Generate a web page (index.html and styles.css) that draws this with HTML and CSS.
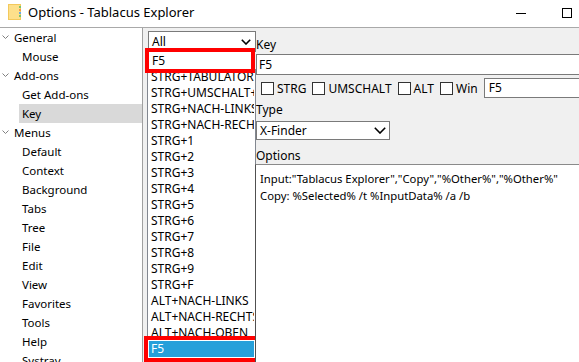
FILE: index.html
```html
<!DOCTYPE html>
<html lang="en">
<head>
    <meta charset="UTF-8">
    <meta name="viewport" content="width=device-width, initial-scale=1.0">
    <title>Options - Tablacus Explorer</title>
    <link rel="stylesheet" href="styles.css">
</head>
<body>
    <div class="window">
        <div class="titlebar">
            <svg class="app-icon" width="14" height="16" viewBox="0 0 14 16">
                <rect x="0.5" y="0.5" width="12" height="15" fill="#fde08b" stroke="#f3c95c"/>
                <rect x="11" y="2" width="2" height="2" fill="#7cc46a"/>
                <rect x="11" y="5" width="2" height="2" fill="#f29a4a"/>
                <rect x="11" y="8" width="2" height="2" fill="#6aa9e0"/>
                <rect x="11" y="11" width="2" height="2" fill="#7cc46a"/>
            </svg>
            <span class="title">Options - Tablacus Explorer</span>
            <span class="caption-btn">
                <svg width="10" height="10" viewBox="0 0 10 10"><path d="M0 5.5h10" stroke="#000" stroke-width="1"/></svg>
            </span>
            <span class="caption-btn">
                <svg width="10" height="10" viewBox="0 0 10 10"><rect x="0.5" y="0.5" width="9" height="9" fill="none" stroke="#000"/></svg>
            </span>
            <span class="caption-btn">
                <svg width="10" height="10" viewBox="0 0 10 10"><path d="M0 0L10 10M10 0L0 10" stroke="#000"/></svg>
            </span>
        </div>

        <div class="main">
            <ul class="tree">
                <li class="node"><svg class="twisty" width="7" height="5" viewBox="0 0 7 5"><path d="M0.5 0.5L3.5 3.5L6.5 0.5" fill="none" stroke="#808080"/></svg>General</li>
                <li class="leaf">Mouse</li>
                <li class="node"><svg class="twisty" width="7" height="5" viewBox="0 0 7 5"><path d="M0.5 0.5L3.5 3.5L6.5 0.5" fill="none" stroke="#808080"/></svg>Add-ons</li>
                <li class="leaf">Get Add-ons</li>
                <li class="leaf selected">Key</li>
                <li class="node"><svg class="twisty" width="7" height="5" viewBox="0 0 7 5"><path d="M0.5 0.5L3.5 3.5L6.5 0.5" fill="none" stroke="#808080"/></svg>Menus</li>
                <li class="leaf">Default</li>
                <li class="leaf">Context</li>
                <li class="leaf">Background</li>
                <li class="leaf">Tabs</li>
                <li class="leaf">Tree</li>
                <li class="leaf">File</li>
                <li class="leaf">Edit</li>
                <li class="leaf">View</li>
                <li class="leaf">Favorites</li>
                <li class="leaf">Tools</li>
                <li class="leaf">Help</li>
                <li class="leaf">Systray</li>
            </ul>

            <div class="content">
                <div class="keys">
                    <div class="combo all-combo">
                        <span>All</span>
                        <svg width="10" height="6" viewBox="0 0 10 6"><path d="M0.8 0.8L5 5L9.2 0.8" fill="none" stroke="#000" stroke-width="1.6"/></svg>
                    </div>
                    <div class="filter">F5</div>
                    <ul class="keylist">
                        <li>STRG+TABULATOR</li>
                        <li>STRG+UMSCHALT+TABULATOR</li>
                        <li>STRG+NACH-LINKS</li>
                        <li>STRG+NACH-RECHTS</li>
                        <li>STRG+1</li>
                        <li>STRG+2</li>
                        <li>STRG+3</li>
                        <li>STRG+4</li>
                        <li>STRG+5</li>
                        <li>STRG+6</li>
                        <li>STRG+7</li>
                        <li>STRG+8</li>
                        <li>STRG+9</li>
                        <li>STRG+F</li>
                        <li>ALT+NACH-LINKS</li>
                        <li>ALT+NACH-RECHTS</li>
                        <li>ALT+NACH-OBEN</li>
                        <li class="selected">F5</li>
                        <li>F6</li>
                    </ul>
                </div>

                <div class="detail">
                    <div class="field-label">Key</div>
                    <div class="textbox key-box">F5</div>
                    <div class="mods">
                        <span class="mod"><span class="check"></span>STRG</span>
                        <span class="mod"><span class="check"></span>UMSCHALT</span>
                        <span class="mod"><span class="check"></span>ALT</span>
                        <span class="mod"><span class="check"></span>Win</span>
                        <div class="textbox win-box">F5</div>
                    </div>
                    <div class="field-label type-label">Type</div>
                    <div class="combo type-combo">
                        <span>X-Finder</span>
                        <svg width="12" height="7" viewBox="0 0 12 7"><path d="M0.8 0.8L6 6L11.2 0.8" fill="none" stroke="#000" stroke-width="1.6"/></svg>
                    </div>
                    <div class="field-label options-label">Options</div>
                    <div class="options-text">Input:"Tablacus Explorer","Copy","%Other%","%Other%"<br>Copy: %Selected% /t %InputData% /a /b</div>
                </div>
            </div>
        </div>
    </div>
</body>
</html>
```

FILE: styles.css
```css
html, body {
    margin: 0;
    overflow: hidden;
}

body {
    font-family: "Noto Sans", "Open Sans", sans-serif;
    font-size: 12px;
    color: #000;
    background-color: #fff;
}

.window {
    width: 636px;
    height: 362px;
    display: flex;
    flex-direction: column;
}

/* Title bar */
.titlebar {
    height: 27px;
    flex-shrink: 0;
    display: flex;
    align-items: flex-start;
    background-color: #fff;
    border-bottom: 1px solid #a9a9a9;
}

.app-icon {
    margin: 4px 0 0 8px;
}

.title {
    margin-left: 6px;
    font-size: 13px;
    line-height: 24px;
    flex: 1;
}

.caption-btn {
    width: 46px;
    height: 23px;
    display: flex;
    align-items: center;
    justify-content: center;
    padding-top: 1px;
}

/* Main area */
.main {
    flex: 1;
    display: flex;
    overflow: hidden;
}

.tree {
    width: 142px;
    flex-shrink: 0;
    margin: 0;
    padding: 0;
    list-style: none;
    font-size: 11.5px;
    background-color: #fff;
    border-right: 1px solid #a0a0a0;
}

.tree li {
    height: 19px;
    line-height: 20px;
    white-space: nowrap;
}

.tree .node {
    padding-left: 2px;
}

.twisty {
    margin-right: 5px;
    vertical-align: 2px;
}

.tree .leaf {
    margin-left: 19px;
    padding-left: 3px;
}

.tree .leaf.selected {
    background-color: #d9d9d9;
}

.content {
    flex: 1;
    display: flex;
    background-color: #f0f0f0;
    padding: 3px 0 0 4px;
}

/* Key list column */
.keys {
    width: 109px;
    flex-shrink: 0;
    display: flex;
    flex-direction: column;
}

.combo {
    flex-shrink: 0;
    display: flex;
    align-items: center;
    justify-content: space-between;
    background-color: #fff;
    border: 1px solid #7a7a7a;
    box-sizing: border-box;
}

.all-combo {
    height: 21px;
    margin-left: 1px;
    padding: 0 4px 0 3px;
}

.filter {
    position: relative;
    z-index: 1;
    flex-shrink: 0;
    height: 25px;
    box-sizing: border-box;
    margin: -4px 1px 0 -2px;
    padding-left: 3px;
    line-height: 17px;
    border: 4px solid #f00;
    background-color: #fff;
}

.keylist {
    flex-shrink: 0;
    margin: -4px 0 0 0;
    padding: 0;
    list-style: none;
    background-color: #fff;
    border-left: 1px solid #828790;
    border-right: 1px solid #828790;
}

.keylist li {
    height: 16px;
    line-height: 16px;
    margin: 0 1px;
    padding-left: 2px;
    white-space: nowrap;
    overflow: hidden;
}

.keylist li.selected {
    background-color: #26a0da;
    color: #fff;
    outline: 4px solid #f00;
    outline-offset: 1px;
}

/* Detail column */
.detail {
    flex: 1;
    display: flex;
    flex-direction: column;
    padding-top: 6px;
}

.field-label {
    flex-shrink: 0;
    line-height: 16px;
    height: 16px;
}

.textbox {
    flex-shrink: 0;
    background-color: #fff;
    border: 1px solid #7a7a7a;
    box-sizing: border-box;
}

.key-box {
    height: 21px;
    margin-top: 1px;
    line-height: 19px;
    padding-left: 2px;
}

.mods {
    flex-shrink: 0;
    display: flex;
    align-items: center;
    height: 20px;
    margin-top: 3px;
    padding-left: 5px;
}

.mod {
    display: flex;
    align-items: center;
    margin-right: 6px;
}

.check {
    width: 13px;
    height: 13px;
    box-sizing: border-box;
    border: 1px solid #333;
    background-color: #fff;
    margin-right: 3px;
}

.win-box {
    flex: 1;
    height: 20px;
    line-height: 18px;
    padding-left: 4px;
}

.type-label {
    margin-top: 4px;
}

.type-combo {
    width: 134px;
    height: 19px;
    margin-top: 3px;
    padding: 0 3px 0 3px;
}

.options-label {
    margin-top: 8px;
}

.options-text {
    flex: 1;
    margin-left: -1px;
    padding: 5px 0 0 4px;
    font-size: 11.3px;
    line-height: 17px;
    background-color: #fff;
    border-top: 1px solid #8a8a8a;
    border-left: 1px solid #505050;
    white-space: nowrap;
}
```
